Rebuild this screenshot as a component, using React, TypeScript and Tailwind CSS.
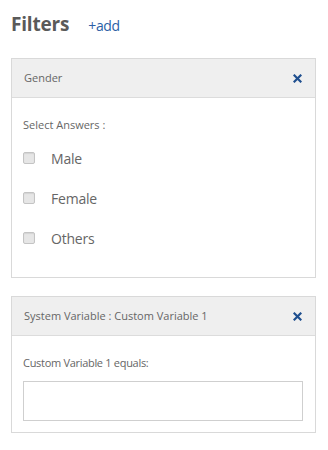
const font = { fontFamily: '"Open Sans", "Noto Sans", sans-serif' }

function CloseX() {
  return (
    <svg width="9" height="9" viewBox="0 0 9 9" className="shrink-0">
      <path d="M1.5 1.5 L7.5 7.5 M7.5 1.5 L1.5 7.5" stroke="#1f4f8f" strokeWidth="2.2" strokeLinecap="square" />
    </svg>
  )
}

function CardHeader({ title }: { title: string }) {
  return (
    <div className="flex items-center justify-between h-[39px] pl-[12px] pr-[13px] bg-[#efefef] border-b border-[#dcdcdc]">
      <span className="text-[11px] text-[#666]">{title}</span>
      <CloseX />
    </div>
  )
}

function Check({ label }: { label: string }) {
  return (
    <div className="flex items-center h-[40px]">
      <span className="w-[12px] h-[12px] rounded-[2px] bg-[#e6e6e6] border border-[#c4c4c4] shadow-[inset_0_1px_1px_rgba(0,0,0,0.08)]" />
      <span className="ml-[16px] text-[14px] text-[#666] tracking-[-0.2px]">{label}</span>
    </div>
  )
}

export default function App() {
  return (
    <div className="w-[328px] h-[450px] bg-white pl-[11px] pr-[12px] pt-[10px]" style={font}>
      <div className="flex items-baseline h-[30px]">
        <h1 className="text-[19px] font-bold text-[#5a5a5a] leading-[28px] tracking-[-0.2px]">Filters</h1>
        <a className="ml-[19px] text-[14px] text-[#2c5fa6] tracking-[-0.3px]">+add</a>
      </div>

      <div className="mt-[18px] border border-[#d9d9d9]">
        <CardHeader title="Gender" />
        <div className="px-[11px] pt-[19px] pb-[19px]">
          <p className="text-[11px] text-[#666] leading-[16px] mb-[5px]">Select Answers :</p>
          <Check label="Male" />
          <Check label="Female" />
          <Check label="Others" />
        </div>
      </div>

      <div className="mt-[18px] border border-[#d9d9d9]">
        <CardHeader title="System Variable : Custom Variable 1" />
        <div className="px-[11px] pt-[19px] pb-[11px]">
          <p className="text-[11px] text-[#666] leading-[16px] tracking-[-0.3px]">Custom Variable 1 equals:</p>
          <input className="mt-[10px] block w-[280px] h-[40px] border border-[#cfcfcf] outline-none" />
        </div>
      </div>
    </div>
  )
}
